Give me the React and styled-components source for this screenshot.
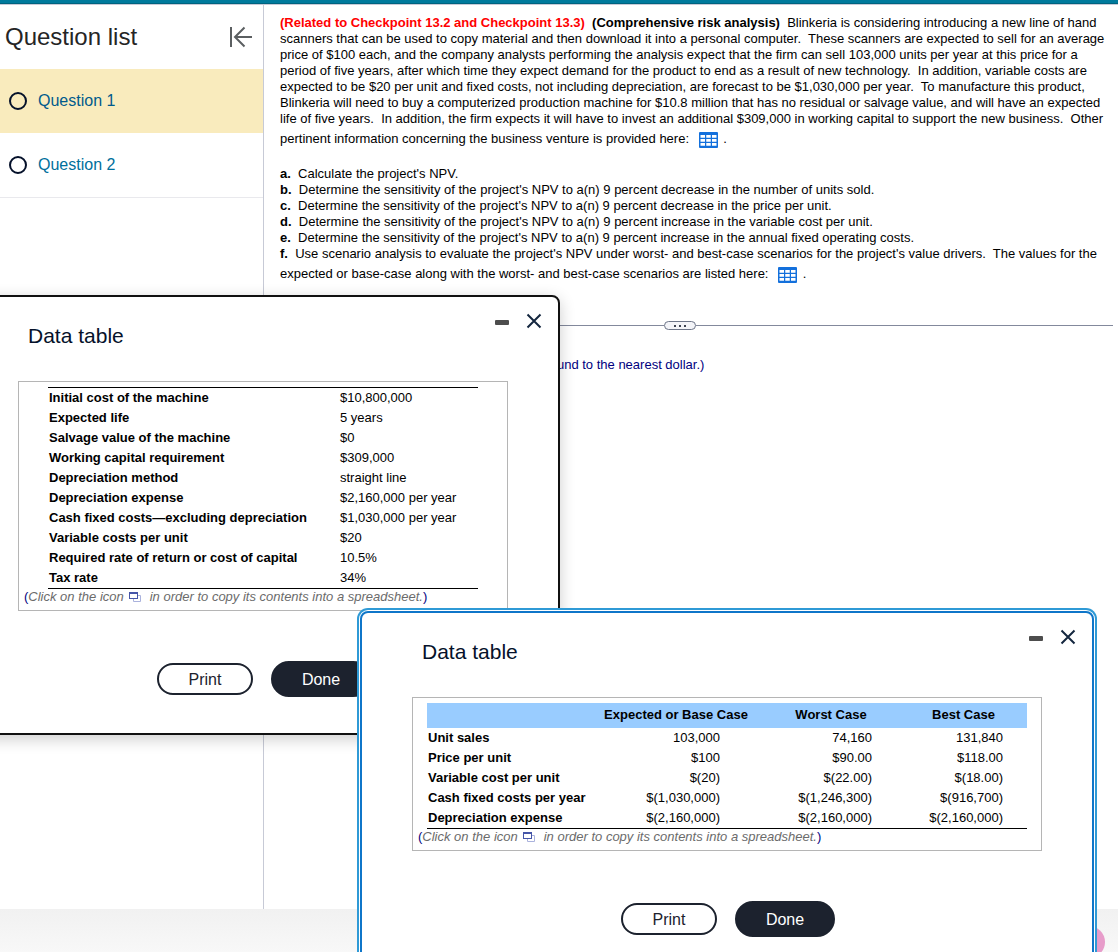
// src/App.jsx
import React from 'react';
import styled, { createGlobalStyle, css } from 'styled-components';

const GlobalStyle = createGlobalStyle`
  *, *::before, *::after {
    box-sizing: border-box;
  }
  body {
    margin: 0;
    background: #f5f5f5;
    color: #000;
    font-family: 'Liberation Sans', Arial, sans-serif;
    font-size: 13px;
    line-height: 16px;
  }
  button {
    font-family: inherit;
    cursor: pointer;
  }
`;

const Page = styled.div`
  position: relative;
  display: flex;
  flex-direction: column;
  height: 100vh;
  overflow: hidden;
`;

const TopBar = styled.div`
  flex: none;
  height: 5px;
  background: #007a9c;
  border-bottom: 1px solid #c7cad6;
  box-shadow: inset 0 -1px 0 #00637f;
`;

const Workspace = styled.div`
  flex: 1;
  display: flex;
  min-height: 0;
  background: #fff;
`;

const Footer = styled.footer`
  flex: none;
  height: 43px;
  background: linear-gradient(#f1f1f1, #f8f8f8);
`;

const Sidebar = styled.nav`
  flex: none;
  width: 264px;
  border-right: 1px solid #c7cad6;
`;

const SidebarHeader = styled.header`
  display: flex;
  align-items: center;
  justify-content: space-between;
  height: 64px;
  padding: 0 10px 0 5px;
`;

const SidebarTitle = styled.h1`
  margin: 0;
  font-size: 24px;
  font-weight: 400;
  line-height: 32px;
  color: #252525;
`;

const IconButton = styled.button`
  display: flex;
  align-items: center;
  justify-content: center;
  height: ${({ $height }) => $height || 16}px;
  padding: 0;
  border: none;
  background: none;
`;

const QuestionItems = styled.ul`
  margin: 0;
  padding: 0;
  list-style: none;
`;

const QuestionItem = styled.li`
  display: flex;
  align-items: center;
  gap: 11px;
  height: ${({ $active }) => ($active ? 64 : 65)}px;
  padding-left: 9px;
  background: ${({ $active }) => ($active ? '#f9ebbd' : '#fff')};
  border-bottom: ${({ $active }) => ($active ? 'none' : '1px solid #e9e9ed')};
`;

const StatusRing = styled.span`
  width: 18px;
  height: 18px;
  border: 2px solid #05112a;
  border-radius: 50%;
`;

const QuestionLink = styled.a`
  font-size: 16px;
  line-height: 20px;
  color: ${({ $active }) => ($active ? '#005a8c' : '#006f9c')};
  text-decoration: none;
`;

const Main = styled.main`
  flex: 1;
  min-width: 0;
  padding: 10px 5px 0 16px;
`;

const Paragraph = styled.p`
  margin: 0;
`;

const Reference = styled.strong`
  color: #f00;
`;

const Parts = styled.div`
  margin-top: 18px;
`;

const TableLink = styled.button`
  display: inline-block;
  margin: 5px 2px 0 6px;
  padding: 0;
  border: none;
  background: none;
  vertical-align: -5px;

  svg {
    display: block;
  }
`;

const Divider = styled.div`
  display: grid;
  grid-template-columns: 400fr 32px 417fr;
  align-items: center;
  margin: 38px 0 0 -16px;
`;

const DividerLine = styled.span`
  height: 1px;
  background: #83899c;
`;

const DividerHandle = styled.button`
  display: flex;
  align-items: center;
  justify-content: center;
  height: 9px;
  padding: 0;
  border: 1px solid #6d7588;
  border-radius: 5px;
  background: #f3f4f8;
`;

const Hint = styled.p`
  margin: 27px 0 0;
  padding-left: 256px;
  color: #000080;
`;

const HelpBubble = styled.span`
  position: absolute;
  right: 13px;
  bottom: -6px;
  width: 32px;
  height: 32px;
  border-radius: 50%;
  background: #e79cca;
`;

const Window = styled.section`
  position: absolute;
  left: ${({ $x }) => $x}px;
  top: ${({ $y }) => $y}px;
  padding-bottom: 36px;
  background: #fff;
  border: 2px solid #111;
  border-radius: 8px;
  box-shadow: 0 4px 16px rgba(0, 0, 0, 0.2);

  ${({ $focused }) =>
    $focused &&
    css`
      border-color: #0f76c9;
      box-shadow: 0 0 0 1px #fff, 0 0 0 3px #2f9ad6;
    `}
`;

const WindowHeader = styled.header`
  display: flex;
  justify-content: space-between;
  height: 84px;
  padding: 16px 16px 0 60px;
`;

const WindowTitle = styled.h2`
  margin: 11px 0 0;
  font-size: 21px;
  font-weight: 400;
  line-height: 24px;
  color: #05112a;
`;

const WindowControls = styled.div`
  display: flex;
  align-items: flex-start;
  gap: 17px;
`;

const Sheet = styled.div`
  width: ${({ $width }) => $width}px;
  margin: 0 50px;
  padding: 5px;
  border: 1px solid #b5b5b5;
`;

const DataTable = styled.table`
  width: ${({ $width }) => $width}px;
  margin: 0 auto;
  border-collapse: separate;
  border-spacing: 0;
  table-layout: fixed;
  border-top: ${({ $topRule }) => ($topRule ? '1px solid #000' : 'none')};
  border-bottom: 1px solid #000;
`;

const HeadCell = styled.th`
  width: ${({ $width }) => $width}px;
  height: 25px;
  padding: 0 0 2px;
  background: #9cf;
  text-align: center;
`;

const RowLabel = styled.th`
  width: ${({ $width }) => $width}px;
  height: 20px;
  padding: 0 0 0 1px;
  text-align: left;
  white-space: nowrap;
`;

const Cell = styled.td`
  height: 20px;
  padding: 0 ${({ $right }) => $right || 0}px 0 0;
  text-align: ${({ $right }) => ($right ? 'right' : 'left')};
  white-space: nowrap;
`;

const CopyNote = styled.p`
  margin: 0;
  color: #000080;

  em {
    color: #6b6b6b;
  }
`;

const CopyButton = styled.button`
  margin: 0 9px 0 5px;
  padding: 0;
  border: none;
  background: none;
  vertical-align: -1px;

  svg {
    display: block;
  }
`;

const Actions = styled.div`
  display: flex;
  align-items: center;
  justify-content: center;
  gap: 18px;
  margin-top: 50px;
  padding-left: 2px;
`;

const PillButton = styled.button`
  width: ${({ $primary }) => ($primary ? 100 : 96)}px;
  height: ${({ $primary }) => ($primary ? 36 : 32)}px;
  padding: 2px 0 0;
  border: 2px solid #1c222e;
  border-radius: 18px;
  background: ${({ $primary }) => ($primary ? '#1c222e' : '#fff')};
  color: ${({ $primary }) => ($primary ? '#fff' : '#1c222e')};
  font-size: 16px;
  line-height: 20px;
`;

const CollapseIcon = () => (
  <svg width="24" height="22" viewBox="0 0 24 22" fill="none" stroke="#5b5f61" strokeWidth="2">
    <path d="M2 1v20M23 11H6M15.5 1.5L6 11l9.5 9.5" />
  </svg>
);

const MinimizeIcon = () => (
  <svg width="14" height="16" viewBox="0 0 14 16">
    <rect y="7" width="14" height="5" rx="1" fill="#4d4d4d" />
  </svg>
);

const CloseIcon = () => (
  <svg width="16" height="16" viewBox="0 0 16 16" fill="none" stroke="#14273f" strokeWidth="2">
    <path d="M1.5 1.5l13 13M14.5 1.5l-13 13" />
  </svg>
);

const GridIcon = () => (
  <svg width="19" height="16" viewBox="0 0 19 16">
    <rect width="19" height="16" rx="1" fill="#1370dc" />
    {[3, 7, 11].map((y) =>
      [1.5, 7.25, 13].map((x) => (
        <rect key={`${x}-${y}`} x={x} y={y} width="4.5" height="2.75" fill="#fff" />
      ))
    )}
  </svg>
);

const CopyIcon = () => (
  <svg width="12" height="10" viewBox="0 0 12 10" fill="none">
    <path d="M9 3.5h2.5v6h-7V7" stroke="#aab2dd" />
    <rect x="0.5" y="0.5" width="8" height="6" fill="#fff" stroke="#4656a8" />
    <path d="M0 1h9" stroke="#4656a8" strokeWidth="2" />
  </svg>
);

const HandleDots = () => (
  <svg width="12" height="2" viewBox="0 0 12 2" fill="#3c4250">
    <rect width="2" height="2" />
    <rect x="5" width="2" height="2" />
    <rect x="10" width="2" height="2" />
  </svg>
);

const questions = ['Question 1', 'Question 2'];

const parts = [
  ['a.', "Calculate the project's NPV."],
  ['b.', "Determine the sensitivity of the project's NPV to a(n) 9 percent decrease in the number of units sold."],
  ['c.', "Determine the sensitivity of the project's NPV to a(n) 9 percent decrease in the price per unit."],
  ['d.', "Determine the sensitivity of the project's NPV to a(n) 9 percent increase in the variable cost per unit."],
  ['e.', "Determine the sensitivity of the project's NPV to a(n) 9 percent increase in the annual fixed operating costs."],
];

const ventureData = [
  ['Initial cost of the machine', '$10,800,000'],
  ['Expected life', '5 years'],
  ['Salvage value of the machine', '$0'],
  ['Working capital requirement', '$309,000'],
  ['Depreciation method', 'straight line'],
  ['Depreciation expense', '$2,160,000 per year'],
  ['Cash fixed costs—excluding depreciation', '$1,030,000 per year'],
  ['Variable costs per unit', '$20'],
  ['Required rate of return or cost of capital', '10.5%'],
  ['Tax rate', '34%'],
];

// amounts are right-aligned under centred headings, so each column has its own inset
const scenarioColumns = [
  { title: 'Expected or Base Case', width: 172, right: 42 },
  { title: 'Worst Case', width: 138, right: 28 },
  { title: 'Best Case', width: 127, right: 24 },
];

const scenarioData = [
  ['Unit sales', '103,000', '74,160', '131,840'],
  ['Price per unit', '$100', '$90.00', '$118.00'],
  ['Variable cost per unit', '$(20)', '$(22.00)', '$(18.00)'],
  ['Cash fixed costs per year', '$(1,030,000)', '$(1,246,300)', '$(916,700)'],
  ['Depreciation expense', '$(2,160,000)', '$(2,160,000)', '$(2,160,000)'],
];

const DataWindow = ({ x, y, focused, sheetWidth, children }) => (
  <Window $x={x} $y={y} $focused={focused} role="dialog" aria-label="Data table">
    <WindowHeader>
      <WindowTitle>Data table</WindowTitle>
      <WindowControls>
        <IconButton type="button" aria-label="Minimize"><MinimizeIcon /></IconButton>
        <IconButton type="button" aria-label="Close"><CloseIcon /></IconButton>
      </WindowControls>
    </WindowHeader>
    <Sheet $width={sheetWidth}>
      {children}
      <CopyNote>
        (<em>Click on the icon</em>
        <CopyButton type="button" aria-label="Copy to spreadsheet"><CopyIcon /></CopyButton>
        <em>in order to copy its contents into a spreadsheet.</em>)
      </CopyNote>
    </Sheet>
    <Actions>
      <PillButton type="button">Print</PillButton>
      <PillButton type="button" $primary>Done</PillButton>
    </Actions>
  </Window>
);

const App = () => (
  <>
    <GlobalStyle />
    <Page>
      <TopBar />
      <Workspace>
        <Sidebar>
          <SidebarHeader>
            <SidebarTitle>Question list</SidebarTitle>
            <IconButton type="button" $height={22} aria-label="Collapse question list">
              <CollapseIcon />
            </IconButton>
          </SidebarHeader>
          <QuestionItems>
            {questions.map((label, i) => (
              <QuestionItem key={label} $active={i === 0}>
                <StatusRing />
                <QuestionLink href={`#question-${i + 1}`} $active={i === 0}>{label}</QuestionLink>
              </QuestionItem>
            ))}
          </QuestionItems>
        </Sidebar>

        <Main>
          <Paragraph>
            <Reference>(Related to Checkpoint 13.2 and Checkpoint 13.3)</Reference>
            {'\u00a0 '}
            <strong>(Comprehensive risk analysis)</strong>
            {'\u00a0 '}
            Blinkeria is considering introducing a new line of hand scanners that can be used to copy
            material and then download it into a personal computer.&nbsp; These scanners are expected to
            sell for an average price of $100 each, and the company analysts performing the analysis
            expect that the firm can sell 103,000 units per year at this price for a period of five
            years, after which time they expect demand for the product to end as a result of new
            technology.&nbsp; In addition, variable costs are expected to be $20 per unit and fixed
            costs, not including depreciation, are forecast to be $1,030,000 per year.&nbsp; To
            manufacture this product, Blinkeria will need to buy a computerized production machine for
            $10.8 million that has no residual or salvage value, and will have an expected life of five
            years.&nbsp; In addition, the firm expects it will have to invest an additional $309,000 in
            working capital to support the new business.&nbsp; Other pertinent information concerning
            the business venture is provided here:{' '}
            <TableLink type="button" aria-label="Open venture data table"><GridIcon /></TableLink>
            {' .'}
          </Paragraph>

          <Parts>
            {parts.map(([letter, text]) => (
              <Paragraph key={letter}>
                <strong>{letter}</strong>
                {'\u00a0 '}
                {text}
              </Paragraph>
            ))}
            <Paragraph>
              <strong>f.</strong>
              {'\u00a0 '}
              Use scenario analysis to evaluate the project's NPV under worst- and best-case scenarios for
              the project's value drivers.&nbsp; The values for the expected or base-case along with the
              worst- and best-case scenarios are listed here:{' '}
              <TableLink type="button" aria-label="Open scenario data table"><GridIcon /></TableLink>
              {' .'}
            </Paragraph>
          </Parts>

          <Divider>
            <DividerLine />
            <DividerHandle type="button" aria-label="Resize"><HandleDots /></DividerHandle>
            <DividerLine />
          </Divider>

          <Hint>(Round to the nearest dollar.)</Hint>
        </Main>
      </Workspace>
      <Footer />
      <HelpBubble />

      <DataWindow x={-34} y={295} sheetWidth={490}>
        <DataTable $width={430} $topRule>
          <tbody>
            {ventureData.map(([label, value]) => (
              <tr key={label}>
                <RowLabel scope="row" $width={292}>{label}</RowLabel>
                <Cell>{value}</Cell>
              </tr>
            ))}
          </tbody>
        </DataTable>
      </DataWindow>

      <DataWindow x={360} y={611} sheetWidth={630} focused>
        <DataTable $width={600}>
          <thead>
            <tr>
              <HeadCell $width={163} aria-label="Item" />
              {scenarioColumns.map(({ title, width }) => (
                <HeadCell key={title} scope="col" $width={width}>{title}</HeadCell>
              ))}
            </tr>
          </thead>
          <tbody>
            {scenarioData.map(([label, ...values]) => (
              <tr key={label}>
                <RowLabel scope="row" $width={163}>{label}</RowLabel>
                {values.map((value, i) => (
                  <Cell key={scenarioColumns[i].title} $right={scenarioColumns[i].right}>{value}</Cell>
                ))}
              </tr>
            ))}
          </tbody>
        </DataTable>
      </DataWindow>
    </Page>
  </>
);

export default App;
